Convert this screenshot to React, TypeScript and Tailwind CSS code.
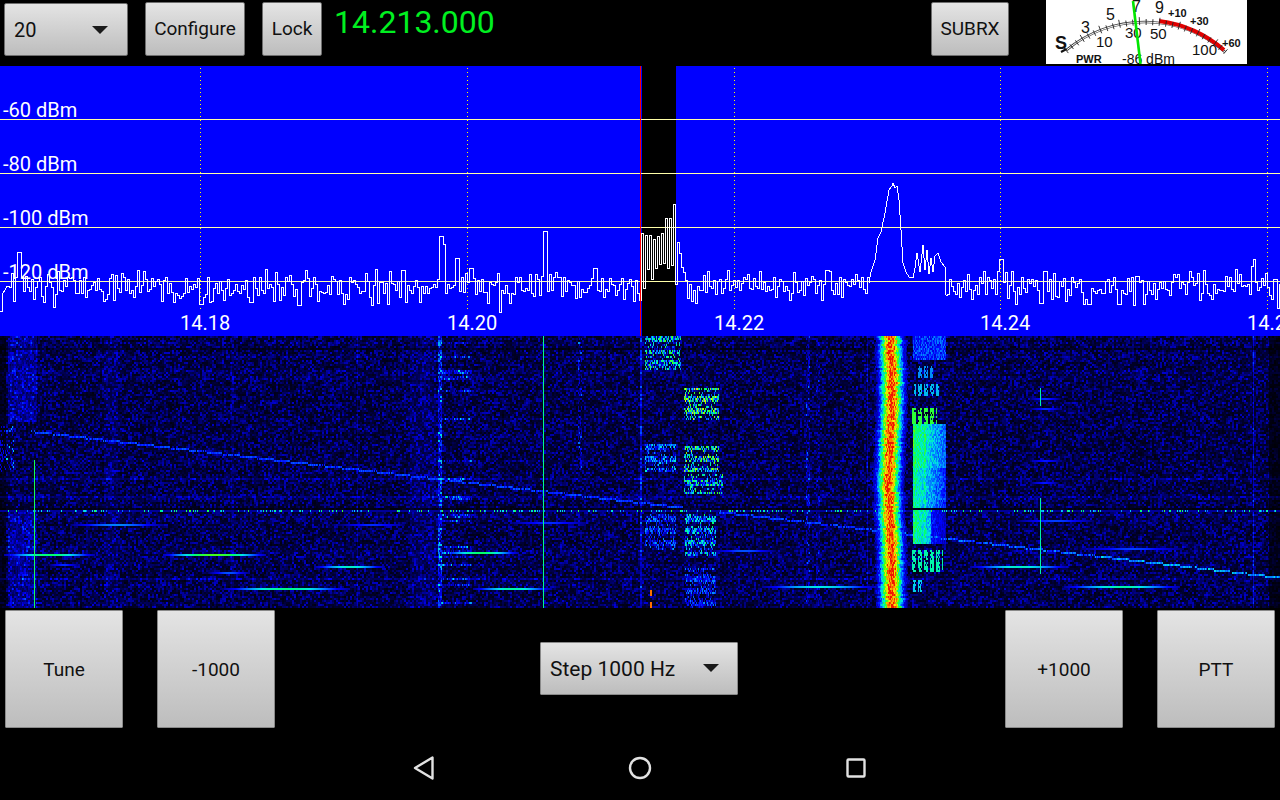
import { useEffect, useMemo, useRef } from "react";

const WIDTH = 1280;
const FALL_H = 272;

// small seeded generator so the picture is the same on every load
function makeRand(seed: number) {
  let s = seed;
  return () => {
    s = (s * 1664525 + 1013904223) >>> 0;
    return ((s >>> 8) & 0xffff) / 65536;
  };
}

const STOPS: [number, number, number, number][] = [
  [0, 0, 0, 0],
  [0.12, 0, 0, 60],
  [0.42, 0, 0, 255],
  [0.55, 0, 130, 255],
  [0.64, 0, 230, 230],
  [0.72, 0, 255, 110],
  [0.8, 90, 255, 0],
  [0.87, 240, 240, 0],
  [0.94, 255, 130, 0],
  [1, 240, 20, 0],
];

function colorAt(v: number): [number, number, number] {
  const t = Math.max(0, Math.min(1, v));
  for (let i = 1; i < STOPS.length; i++) {
    if (t <= STOPS[i][0]) {
      const a = STOPS[i - 1];
      const b = STOPS[i];
      const k = (t - a[0]) / (b[0] - a[0]);
      return [a[1] + (b[1] - a[1]) * k, a[2] + (b[2] - a[2]) * k, a[3] + (b[3] - a[3]) * k];
    }
  }
  return [240, 20, 0];
}

// x1, x2, y, peak brightness
const STROKES: [number, number, number, number][] = [
  [71, 163, 188, 0.55],
  [4, 94, 217, 0.72],
  [163, 265, 217, 0.78],
  [314, 384, 229, 0.66],
  [208, 249, 236, 0.5],
  [224, 347, 252, 0.7],
  [339, 404, 187, 0.46],
  [443, 518, 215, 0.72],
  [473, 551, 251, 0.68],
  [510, 588, 186, 0.46],
  [49, 78, 227, 0.46],
  [1030, 1060, 62, 0.46],
  [1030, 1060, 71, 0.46],
  [1030, 1060, 123, 0.44],
  [1030, 1058, 146, 0.44],
  [1017, 1093, 184, 0.48],
  [1081, 1183, 212, 0.48],
  [970, 1068, 230, 0.66],
  [1064, 1179, 249, 0.68],
  [713, 775, 214, 0.5],
  [762, 877, 250, 0.64],
];

// x1, x2, y1, y2, brightness of the speckled keying blocks
const BLOCKS: [number, number, number, number, number][] = [
  [645, 680, 0, 32, 0.72],
  [684, 718, 52, 82, 0.8],
  [684, 718, 110, 135, 0.78],
  [684, 722, 138, 157, 0.72],
  [645, 675, 107, 135, 0.6],
  [645, 675, 178, 212, 0.54],
  [685, 715, 178, 218, 0.66],
  [685, 715, 232, 272, 0.52],
];

// the little lines of text somebody sent in the waterfall, as dot rows
const SCRIPT: [number, number, number, number, number][] = [
  [917, 932, 30, 41, 0.56],
  [914, 938, 47, 58, 0.6],
  [912, 936, 71, 86, 0.76],
  [912, 942, 214, 235, 0.68],
  [913, 923, 243, 255, 0.62],
];

function inside(x: number, y: number, b: [number, number, number, number, number]) {
  return x >= b[0] && x <= b[1] && y >= b[2] && y <= b[3];
}

function fallValue(x: number, y: number, noise: number, rand: () => number, rowGain: number, wob: number) {
  let v = noise;

  // dim receiver edges and vertical bands
  if (x < 6 || x > 1268) v *= 0.35;
  if (x >= 8 && x < 37 && (y < 85 || y > 170)) v += 0.1 * rand() + 0.07;
  if (x >= 104 && x < 118) v += 0.05;
  if (x >= 410 && x < 436) v += 0.05;
  if (x >= 231 && x < 234) v += 0.06;
  if (x === 357) v += 0.1;
  if (x === 867) v += 0.14;
  if (x === 1253) v += 0.2;
  if (x >= 640 && x < 642) v += 0.22;
  if (x >= 806 && x < 810) v += rand() < 0.35 ? 0.22 : 0.04;
  if (x >= 816 && x < 820) v += rand() < 0.25 ? 0.14 : 0.02;
  if (x >= 578 && x < 582 && y < 140) v += rand() < 0.25 ? 0.22 : 0;
  if (x < 14 && y > 88 && y < 135) v += rand() < 0.25 ? 0.3 : 0;

  // busy cw area near 14.20
  if (x >= 438 && x < 442) v += rand() < 0.7 ? 0.3 : 0.1;
  if (x >= 442 && x < 472 && rowGain > 0.02) v += rand() * 0.34;

  v += rowGain;

  for (const s of STROKES) {
    if (y >= s[2] && y < s[2] + 2 && x >= s[0] && x <= s[1]) {
      const mid = (s[0] + s[1]) / 2;
      const half = (s[1] - s[0]) / 2;
      const d = Math.abs(x - mid) / half;
      v = Math.max(v, s[3] * (1 - d * d * 0.6));
    }
  }

  for (const b of BLOCKS) {
    if (inside(x, y, b) && (Math.floor(y / 6) % 2 === 0 ? rand() < 0.7 : rand() < 0.22)) {
      v = Math.max(v, b[4] * (0.55 + rand() * 0.55));
    }
  }

  // sloping carrier across the whole band
  const slope = 91 + 0.117 * x;
  if (Math.abs(y - slope) < 1 && x > 30 && rand() < 0.92) {
    v = Math.max(v, 0.42 + (x > 900 ? 0.16 : 0.1) * rand() + (x > 1100 ? 0.06 : 0));
  }

  // dead rows plus the speckled sync row
  if (y >= 171 && y < 173) v *= 0.3;
  if (y >= 173 && y < 175) v = rand() < 0.22 ? 0.5 + rand() * 0.28 : 0.26;
  if (y >= 12 && y < 14) v *= 0.5;

  // steady strong am-like carrier at 14.23
  const cx = 890 + wob;
  const dist = Math.abs(x - cx);
  const column = 0.98 * Math.exp(-(dist * dist) / 190) + (rand() - 0.5) * 0.16;
  v = Math.max(v, dist < 16 ? column : 0);

  // picture block beside the carrier
  if (x >= 913 && x <= 945 && ((y >= 88 && y < 172) || (y >= 173 && y < 208))) {
    const k = (x - 913) / 32;
    const lower = y > 130 && y < 171 ? 0.05 : 0;
    const drop = y >= 173 ? (x > 930 ? 0.18 : 0.03) : 0;
    const stripe = x >= 924 && x < 926 ? 0.05 : 0;
    v = Math.max(v, 0.75 - k * 0.24 - lower - drop + stripe + (rand() - 0.5) * 0.14);
  }
  if (x >= 913 && x <= 945 && y < 24) v = Math.max(v, 0.36 + rand() * 0.2);
  for (const b of SCRIPT) {
    if (inside(x, y, b) && Math.floor(x / 2) % 3 !== 2 && rand() < 0.8) v = Math.max(v, b[4]);
  }

  // vertical carriers go on top
  if (x === 34 && y > 122) v = 0.74;
  if (x === 543) v = 0.7;
  if (x === 1040 && ((y > 50 && y < 70) || (y > 160 && y < 238))) v = 0.68;
  if (x >= 650 && x < 652 && ((y >= 254 && y < 260) || (y >= 266 && y < 272))) v = 0.95;

  return v;
}

function Waterfall() {
  const ref = useRef<HTMLCanvasElement>(null);

  useEffect(() => {
    const canvas = ref.current;
    const ctx = canvas?.getContext("2d");
    if (!canvas || !ctx) return;
    const rand = makeRand(77);
    const w = WIDTH;
    const h = FALL_H / 2;
    const img = ctx.createImageData(w, h);
    for (let j = 0; j < h; j++) {
      const y = j * 2;
      const wob = Math.sin(y / 31) * 1.4 + (rand() - 0.5) * 2.2;
      let rowGain = rand() < 0.18 ? 0.03 : 0;
      if (y === 142 || y === 160 || y === 242) rowGain = 0.09;
      let noise = 0;
      for (let i = 0; i < w; i++) {
        // the noise floor is coarser than one pixel
        if (i % 2 === 0) {
          const r = rand();
          noise = 0.03 + r * r * 0.28 + rand() * 0.05;
        }
        const [r, g, b] = colorAt(fallValue(i, y, noise, rand, rowGain, wob));
        const p = (j * w + i) * 4;
        img.data[p] = r;
        img.data[p + 1] = g;
        img.data[p + 2] = b;
        img.data[p + 3] = 255;
      }
    }
    ctx.putImageData(img, 0, 0);
  }, []);

  return (
    <canvas
      ref={ref}
      width={WIDTH}
      height={FALL_H / 2}
      className="block w-[1280px] h-[272px] [image-rendering:pixelated]"
    />
  );
}

// [x, y] anchors for everything that stands out of the noise floor (screen px)
const PEAK: [number, number][] = [
  [871, 272], [875, 260], [878, 238], [881, 232], [885, 213], [889, 190], [892, 186], [893, 183],
  [895, 188], [897, 186], [899, 200], [901, 230], [903, 263], [906, 272], [909, 277], [913, 278],
  [915, 268], [917, 253], [920, 272], [923, 245], [925, 270], [927, 250], [929, 274], [931, 258],
  [933, 272], [935, 256], [938, 253], [941, 262], [945, 267], [946, 295],
];

const SPIKES: [number, number][] = [
  [18, 252], [53, 307], [440, 236], [442, 244], [456, 258], [499, 312], [544, 231], [826, 270],
  [1000, 259], [1253, 259], [1252, 266], [200, 304], [298, 305], [402, 270], [470, 268],
  [594, 268], [1040, 303], [1088, 304], [1118, 304],
];

function buildTrace() {
  const rand = makeRand(4021);
  const pts: string[] = [];
  pts.push("0,311", "2,311", "2,295", "5,290", "7,286");
  let peakDone = false;
  let prev = 286;
  for (let x = 9; x < 1280; x += 2) {
    if (x > 870 && x < 947) {
      if (!peakDone) {
        PEAK.forEach((p) => pts.push(`${p[0]},${p[1]}`));
        peakDone = true;
        prev = 295;
      }
      continue;
    }
    let y: number;
    const spike = SPIKES.find((s) => Math.abs(s[0] - x) <= 1);
    if (spike) {
      y = spike[1];
    } else if (x >= 640 && x <= 676) {
      const odd = Math.floor(x / 2) % 2 === 0;
      const top = x < 652 ? 208 + rand() * 34 : x < 664 ? 216 + rand() * 30 : 203 + rand() * 26;
      y = odd ? top : 262 + rand() * 26;
    } else if (x > 676 && x < 684) {
      y = 236 + (x - 676) * 5 + rand() * 6;
    } else {
      const r = rand();
      // noise floor sits near 287, with dips down and a few pokes up
      y = 276 + rand() * 18;
      if (r > 0.8) y = 292 + rand() * 13;
      if (r < 0.08) y = 269 + rand() * 6;
      if (x > 1266) y += 6;
    }
    // the app plots bins as little steps, not as a smooth line
    pts.push(`${x},${prev.toFixed(0)}`, `${x},${y.toFixed(0)}`);
    prev = y;
  }
  return pts.join(" ");
}

const DBM_ROWS = [
  { label: "-60 dBm", line: 119 },
  { label: "-80 dBm", line: 173 },
  { label: "-100 dBm", line: 227 },
  { label: "-120 dBm", line: 281 },
];

const GRID_X = [200, 467, 734, 1000, 1267];
const FREQS = ["14.18", "14.20", "14.22", "14.24", "14.26"];

function Spectrum() {
  const trace = useMemo(buildTrace, []);
  return (
    <div className="relative h-[270px] w-[1280px] overflow-hidden bg-[#0000ff]">
      {/* filter passband */}
      <div className="absolute left-[642px] top-0 h-full w-[34px] bg-black" />
      {DBM_ROWS.map((r) => (
        <span
          key={r.label}
          className="absolute left-[3px] text-[20px] leading-[24px] text-white"
          style={{ top: r.line - 66 - 21 }}
        >
          {r.label}
        </span>
      ))}
      {FREQS.map((f, i) => (
        <span
          key={f}
          className="absolute top-[245px] text-[20px] leading-[24px] text-white"
          style={{ left: GRID_X[i] - 20 }}
        >
          {f}
        </span>
      ))}
      <svg className="absolute inset-0" width={1280} height={270} viewBox="0 66 1280 270">
        {DBM_ROWS.map((r) => (
          <line
            key={r.line}
            x1={0}
            x2={1280}
            y1={r.line + 0.5}
            y2={r.line + 0.5}
            stroke="#ffffa8"
            strokeWidth={1}
            shapeRendering="crispEdges"
          />
        ))}
        {GRID_X.map((x) => (
          <line
            key={x}
            x1={x + 0.5}
            x2={x + 0.5}
            y1={68}
            y2={310}
            stroke="#ffff00"
            strokeWidth={1}
            strokeDasharray="1 3"
            shapeRendering="crispEdges"
          />
        ))}
        <polyline
          points={trace}
          fill="none"
          stroke="#ffffff"
          strokeWidth={1}
          strokeLinejoin="miter"
          shapeRendering="crispEdges"
        />
        <line x1={640.5} x2={640.5} y1={66} y2={336} stroke="#ff0000" strokeWidth={1} shapeRendering="crispEdges" />
      </svg>
    </div>
  );
}

function SMeter() {
  const cx = 99.5;
  const cy = 145;
  const R = 123;
  // ticks along the scale, angle measured from straight up
  const ticks = useMemo(() => {
    const out: { a: number; long: boolean }[] = [];
    for (let i = 0; i <= 26; i++) {
      out.push({ a: -40 + i * 3.1, long: i % 3 === 0 });
    }
    return out;
  }, []);
  return (
    <svg
      className="block shrink-0 bg-white"
      width={201}
      height={64}
      viewBox="0 0 201 64"
      fontFamily="'Liberation Sans', Arial, sans-serif"
      fill="#111111"
    >
      <path d={`M20.5 50 A${R} ${R} 0 0 1 179 52`} fill="none" stroke="#444444" strokeWidth={2.6} />
      <path d={`M20.5 50 A${R} ${R} 0 0 1 179 52`} fill="none" stroke="#ffffff" strokeWidth={1} />
      <path d={`M113 21 A${R} ${R} 0 0 1 178 50`} fill="none" stroke="#e00000" strokeWidth={4} />
      {ticks.map((t) => {
        const s = Math.sin((t.a * Math.PI) / 180);
        const c = Math.cos((t.a * Math.PI) / 180);
        const r1 = R - 3;
        const r2 = R + (t.long ? 5 : 3);
        return (
          <line
            key={t.a}
            x1={cx + r1 * s}
            y1={cy - r1 * c}
            x2={cx + r2 * s}
            y2={cy - r2 * c}
            stroke="#222222"
            strokeWidth={0.9}
          />
        );
      })}
      <line x1={20.5} y1={49} x2={15} y2={52} stroke="#111111" strokeWidth={2} />
      <text x={9} y={49} fontSize={18} fontWeight={700}>S</text>
      <text x={35} y={33} fontSize={16}>3</text>
      <text x={60} y={20} fontSize={16}>5</text>
      <text x={86} y={12} fontSize={16}>7</text>
      <text x={109} y={13} fontSize={16}>9</text>
      <text x={122} y={17} fontSize={11} fontWeight={700}>+10</text>
      <text x={144} y={25} fontSize={11} fontWeight={700}>+30</text>
      <text x={176} y={47} fontSize={11} fontWeight={700}>+60</text>
      <text x={50} y={47} fontSize={15}>10</text>
      <text x={79} y={38} fontSize={15}>30</text>
      <text x={104} y={39} fontSize={15}>50</text>
      <text x={146} y={55} fontSize={15}>100</text>
      <text x={30} y={63} fontSize={11} fontWeight={700}>PWR</text>
      <text x={76} y={64} fontSize={14}>-86 dBm</text>
      <line x1={87} y1={1} x2={94.5} y2={64} stroke="#00e600" strokeWidth={2.6} />
    </svg>
  );
}

function Caret() {
  return <span className="h-0 w-0 border-x-[8px] border-t-[8px] border-x-transparent border-t-[#1a1a1a]" />;
}

const KEY =
  "flex items-center justify-center rounded-[2px] border border-[#6e6e6e] bg-gradient-to-b from-[#e4e4e4] to-[#bdbdbd] text-[19px] text-[#111111]";
const BIG_KEY =
  "flex h-[118px] w-[118px] items-center justify-center rounded-[1px] border border-[#8a8a8a] bg-gradient-to-b from-[#e4e4e4] to-[#bdbdbd] pt-[2px] text-[19px] text-[#111111]";

export default function App() {
  return (
    <div className="flex h-[800px] w-[1280px] flex-col overflow-hidden bg-black font-['Roboto',sans-serif]">
      {/* top controls */}
      <div className="flex h-[66px] items-start pt-[2px]">
        <div className={`${KEY} ml-[4px] mt-[1px] h-[53px] w-[124px] !justify-between !text-[20px] pl-[9px] pr-[19px]`}>
          <span>20</span>
          <Caret />
        </div>
        <div className={`${KEY} ml-[17px] h-[54px] w-[100px]`}>Configure</div>
        <div className={`${KEY} ml-[17px] h-[54px] w-[60px]`}>Lock</div>
        <div className="ml-[12px] text-[32px] leading-[41px] text-[#00f020]">14.213.000</div>
        <div className={`${KEY} ml-auto h-[54px] w-[78px]`}>SUBRX</div>
        <div className="ml-[37px] mr-[33px] -mt-[2px]">
          <SMeter />
        </div>
      </div>

      <Spectrum />
      <Waterfall />

      {/* bottom controls */}
      <div className="flex h-[120px] items-center justify-between px-[5px] pt-[2px]">
        <div className="flex gap-[34px]">
          <div className={BIG_KEY}>Tune</div>
          <div className={BIG_KEY}>-1000</div>
        </div>
        <div className="-mt-[2px] mr-[2px] flex h-[53px] w-[198px] items-center justify-between rounded-[1px] border border-[#8a8a8a] bg-gradient-to-b from-[#e4e4e4] to-[#bdbdbd] pl-[9px] pr-[18px] text-[21px] text-[#111111]">
          <span className="pt-[4px]">Step 1000 Hz</span>
          <Caret />
        </div>
        <div className="flex gap-[34px]">
          <div className={BIG_KEY}>+1000</div>
          <div className={BIG_KEY}>PTT</div>
        </div>
      </div>

      {/* android nav bar */}
      <div className="flex h-[72px] items-center justify-center pt-[8px]">
        <div className="flex w-[216px] justify-center">
          <svg width="24" height="26" viewBox="0 0 24 26" fill="none" stroke="#e2e2e2" strokeWidth="2.4" strokeLinejoin="round">
            <path d="M20.5 2.5V23.5L3 13Z" />
          </svg>
        </div>
        <div className="flex w-[216px] justify-center">
          <svg width="26" height="26" viewBox="0 0 26 26" fill="none" stroke="#e2e2e2" strokeWidth="2.4">
            <circle cx="13" cy="13" r="10" />
          </svg>
        </div>
        <div className="flex w-[216px] justify-center">
          <svg width="24" height="24" viewBox="0 0 24 24" fill="none" stroke="#e2e2e2" strokeWidth="2.4" strokeLinejoin="round">
            <rect x="3.5" y="3.5" width="17" height="17" rx="1" />
          </svg>
        </div>
      </div>
    </div>
  );
}
